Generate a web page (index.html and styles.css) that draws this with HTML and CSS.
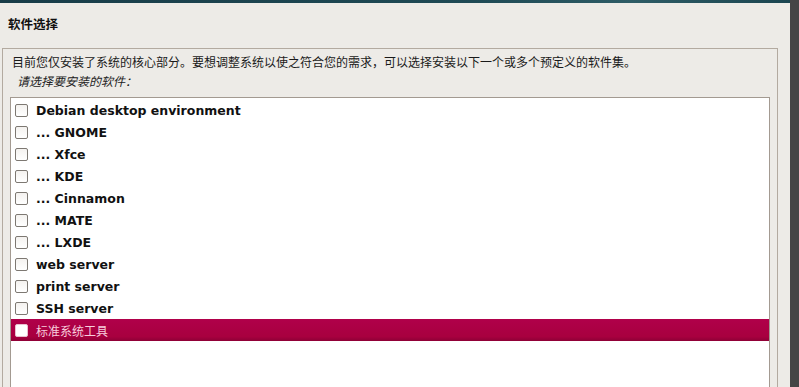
FILE: index.html
```html
<!DOCTYPE html>
<html lang="zh-CN">
<head>
    <meta charset="UTF-8">
    <title>软件选择</title>
    <link rel="stylesheet" href="styles.css">
</head>
<body>
    <div class="screen">
        <div class="installer">
            <div class="top-band"></div>
            <h1 class="page-title">软件选择</h1>

            <div class="frame">
                <p class="intro">目前您仅安装了系统的核心部分。要想调整系统以使之符合您的需求，可以选择安装以下一个或多个预定义的软件集。</p>
                <p class="prompt">请选择要安装的软件：</p>

                <ul class="task-list">
                    <li class="task"><span class="check"></span>Debian desktop environment</li>
                    <li class="task"><span class="check"></span>... GNOME</li>
                    <li class="task"><span class="check"></span>... Xfce</li>
                    <li class="task"><span class="check"></span>... KDE</li>
                    <li class="task"><span class="check"></span>... Cinnamon</li>
                    <li class="task"><span class="check"></span>... MATE</li>
                    <li class="task"><span class="check"></span>... LXDE</li>
                    <li class="task"><span class="check"></span>web server</li>
                    <li class="task"><span class="check"></span>print server</li>
                    <li class="task"><span class="check"></span>SSH server</li>
                    <li class="task selected"><span class="check"></span>标准系统工具</li>
                </ul>
            </div>
        </div>
        <div class="side-bar"></div>
    </div>
</body>
</html>
```

FILE: styles.css
```css
body {
    margin: 0;
    background-color: #edebe7;
    font-family: "DejaVu Sans", "Noto Sans CJK SC", sans-serif;
    overflow: hidden;
}

.screen {
    display: flex;
    height: 387px;
}

.installer {
    width: 790px;
    display: flex;
    flex-direction: column;
}

.side-bar {
    flex: 1;
    background-color: #454545;
}

.top-band {
    height: 3px;
    background: linear-gradient(to right, #183c48, #1f4a55 60%, #2e5c66 80%, #1b4550);
}

.page-title {
    margin: 13px 0 0 8px;
    font-size: 12.5px;
    line-height: 16px;
    font-weight: bold;
    color: #111;
    font-family: "Noto Sans CJK SC", sans-serif;
}

.frame {
    margin: 16px 12px 0 2px;
    border: 1px solid #b3aaa0;
    border-bottom: none;
    padding: 4px 7px 0 7px;
    flex: 1;
    display: flex;
    flex-direction: column;
}

.intro {
    margin: 0 0 0 2px;
    font-family: "Noto Sans CJK SC", sans-serif;
    font-size: 12px;
    line-height: 18px;
    color: #1a1a1a;
}

.prompt {
    margin: 1px 0 0 7px;
    font-family: "Noto Sans CJK SC", sans-serif;
    font-size: 12px;
    line-height: 18px;
    font-style: italic;
    color: #222;
}

.task-list {
    list-style: none;
    margin: 7px 0 0 0;
    padding: 1px 0 0 0;
    flex: 1;
    background-color: white;
    border: 1px solid #a39a91;
    border-bottom: none;
}

.task {
    display: flex;
    align-items: center;
    height: 22px;
    padding-left: 4px;
    font-size: 12.5px;
    font-weight: bold;
    color: #111;
}

.check {
    width: 11px;
    height: 11px;
    border: 1px solid #7d7872;
    border-radius: 2px;
    background: linear-gradient(#f4f2ef, #ffffff);
    margin-right: 8px;
}

.task.selected {
    background: linear-gradient(#b0004a, #a8003f 80%, #8e0036);
    color: #f7cddc;
    font-weight: normal;
    font-family: "Noto Sans CJK SC", sans-serif;
    font-size: 12px;
}

.task.selected .check {
    background: white;
    border-color: #e8c0cf;
}
```
